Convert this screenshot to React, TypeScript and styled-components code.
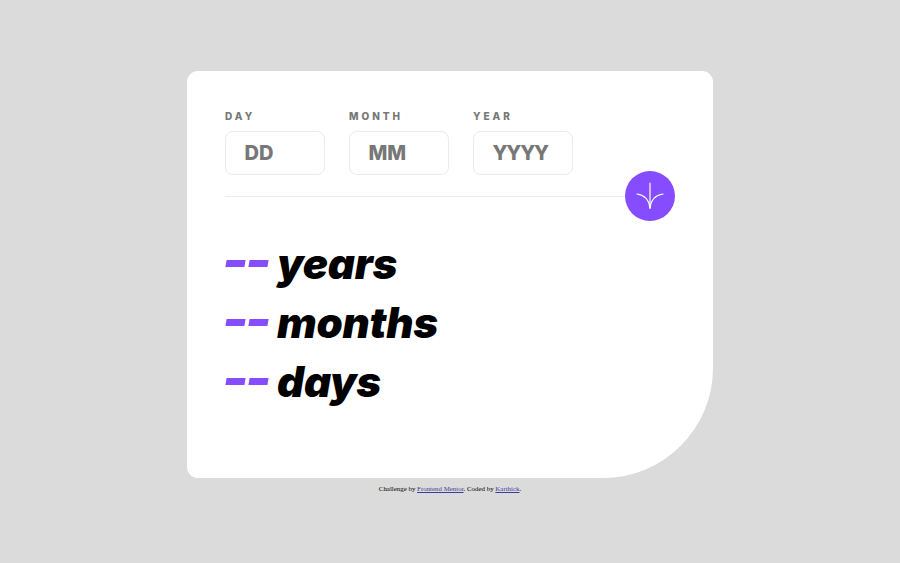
import React from 'react';
import styled, { createGlobalStyle } from 'styled-components';

const GlobalStyle = createGlobalStyle`
  * {
    box-sizing: border-box;
  }

  body {
    margin: 0;
    background: #dbdbdb;
  }
`;

const Page = styled.main`
  height: 563px;
  display: flex;
  flex-direction: column;
  align-items: center;
  padding-top: 71px;
`;

const Card = styled.section`
  width: 526px;
  height: 407px;
  background: #fff;
  border-radius: 11px 11px 110px 11px;
  padding: 38px 38px 0;
`;

const Fields = styled.div`
  display: flex;
  gap: 24px;
`;

const Field = styled.label`
  display: flex;
  flex-direction: column;
  gap: 7px;
  width: 100px;
`;

const FieldLabel = styled.span`
  font-family: 'Inter', sans-serif;
  font-size: 10px;
  line-height: 15px;
  font-weight: 800;
  letter-spacing: 3px;
  color: #777;
`;

const FieldInput = styled.input<{ $tracking?: number }>`
  width: 100px;
  height: 44px;
  border: 1px solid #ebebeb;
  border-radius: 8px;
  padding: 0 18.5px;
  outline: none;
  background: #fff;
  font-family: 'Inter', sans-serif;
  font-size: 20px;
  font-weight: 800;
  letter-spacing: ${({ $tracking }) => $tracking ?? 0}px;
  color: #777;

  &::placeholder {
    color: #777;
    opacity: 1;
  }
`;

const DividerRow = styled.div`
  display: flex;
  align-items: center;
  margin-top: -4px;
`;

const Divider = styled.hr`
  width: 400px;
  height: 1px;
  margin: 0;
  border: 0;
  background: #ebebeb;
`;

const SubmitButton = styled.button`
  width: 50px;
  height: 50px;
  display: flex;
  align-items: center;
  justify-content: center;
  padding: 0;
  border: 0;
  border-radius: 50%;
  background: #854dff;
`;

const Results = styled.div`
  margin-top: 13px;
`;

const ResultLine = styled.p`
  margin: 0;
  display: flex;
  gap: 7px;
  height: 59px;
  align-items: center;
  font-family: 'Inter', sans-serif;
  font-size: 42px;
  line-height: 59px;
  font-weight: 900;
  font-style: italic;
  letter-spacing: -0.2px;
  color: #000;
`;

const Dashes = styled.span`
  display: flex;
  gap: 4px;
  width: 45px;
  padding-left: 1px;
`;

const Dash = styled.i`
  width: 19px;
  height: 7px;
  background: #854dff;
  transform: skewX(-10deg);
`;

const Attribution = styled.footer`
  margin-top: 6px;
  font-family: 'Liberation Serif', serif;
  font-size: 6.9px;
  line-height: 9px;
  color: #000;

  a {
    color: #3e3b9c;
  }
`;

const ArrowIcon = () => (
  <svg width="28" height="28" viewBox="0 0 28 28" fill="none" stroke="#fff" strokeWidth="1.2" strokeLinecap="round">
    <path d="M14 1v25" />
    <path d="M1 12c7 1 12 6 13 14" />
    <path d="M27 12c-7 1-12 6-13 14" />
  </svg>
);

const results = ['years', 'months', 'days'];

const App: React.FC = () => {
  return (
    <>
      <GlobalStyle />
      <Page>
        <Card>
          <Fields>
            <Field>
              <FieldLabel>DAY</FieldLabel>
              <FieldInput placeholder="DD" />
            </Field>
            <Field>
              <FieldLabel>MONTH</FieldLabel>
              <FieldInput placeholder="MM" />
            </Field>
            <Field>
              <FieldLabel>YEAR</FieldLabel>
              <FieldInput placeholder="YYYY" $tracking={-1.2} />
            </Field>
          </Fields>
          <DividerRow>
            <Divider />
            <SubmitButton aria-label="Submit">
              <ArrowIcon />
            </SubmitButton>
          </DividerRow>
          <Results>
            {results.map((unit) => (
              <ResultLine key={unit}>
                <Dashes>
                  <Dash />
                  <Dash />
                </Dashes>
                {unit}
              </ResultLine>
            ))}
          </Results>
        </Card>
        <Attribution>
          Challenge by <a href="#">Frontend Mentor</a>. Coded by <a href="#">Karthick</a>.
        </Attribution>
      </Page>
    </>
  );
};

export default App;
